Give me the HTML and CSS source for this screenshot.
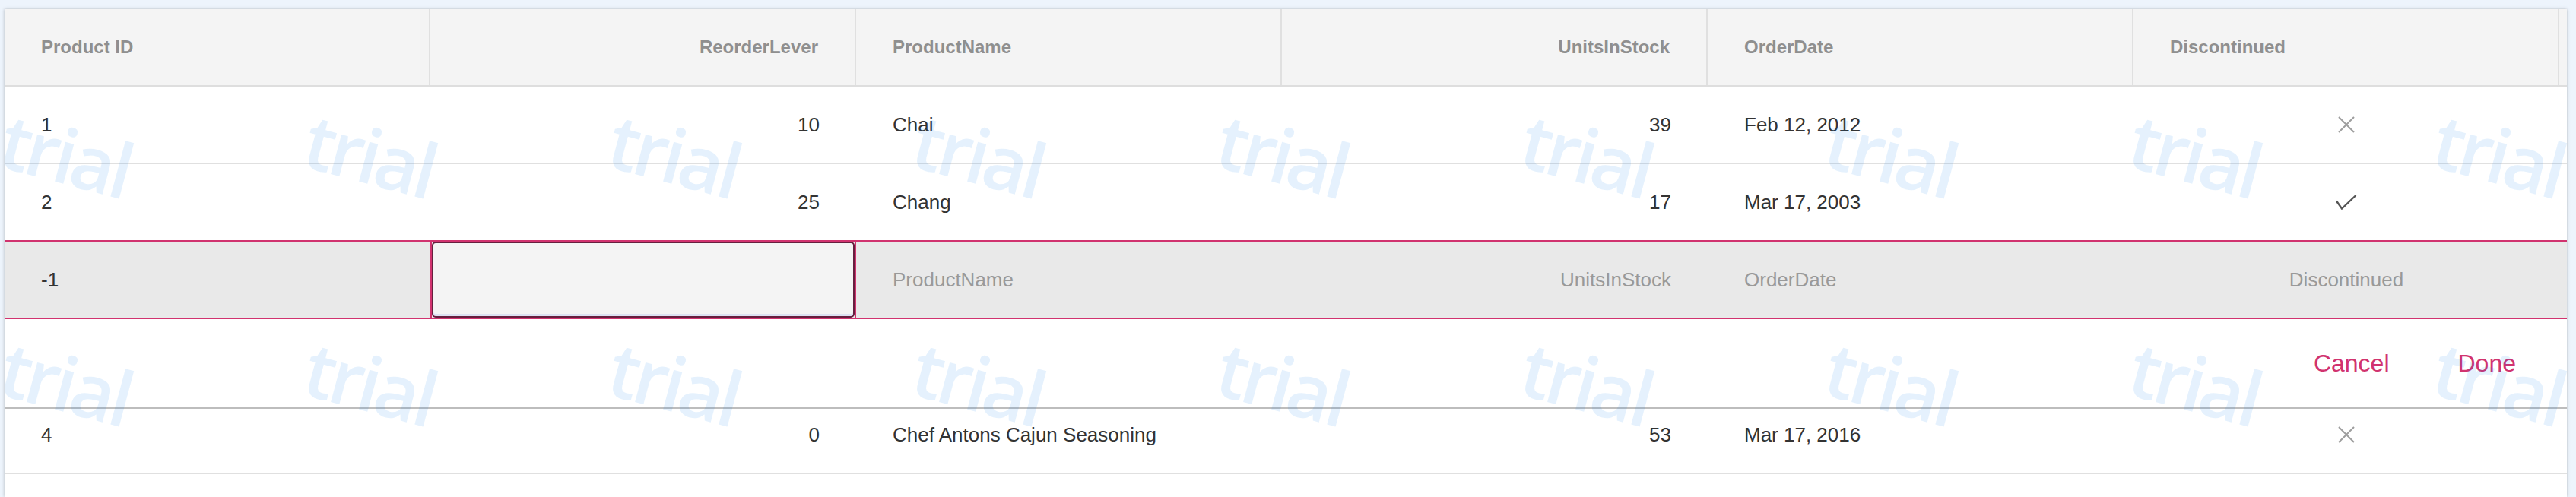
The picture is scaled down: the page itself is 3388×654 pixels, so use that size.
FILE: index.html
```html
<!DOCTYPE html>
<html lang="en">
<head>
    <meta charset="UTF-8">
    <title>Grid row editing</title>
    <link rel="stylesheet" href="styles.css">
</head>
<body>
    <div class="grid">
        <!-- Header -->
        <div class="grid-head">
            <div class="hcell">Product ID</div>
            <div class="hcell num">ReorderLever</div>
            <div class="hcell">ProductName</div>
            <div class="hcell num">UnitsInStock</div>
            <div class="hcell">OrderDate</div>
            <div class="hcell">Discontinued</div>
            <div class="hgutter"></div>
        </div>

        <div class="row">
            <div class="cell">1</div>
            <div class="cell num">10</div>
            <div class="cell">Chai</div>
            <div class="cell num">39</div>
            <div class="cell">Feb 12, 2012</div>
            <div class="cell center">
                <svg class="icon-no" width="22" height="22" viewBox="0 0 22 22"><path d="M1 1L21 21M21 1L1 21"/></svg>
            </div>
        </div>

        <div class="row row-prev">
            <div class="cell">2</div>
            <div class="cell num">25</div>
            <div class="cell">Chang</div>
            <div class="cell num">17</div>
            <div class="cell">Mar 17, 2003</div>
            <div class="cell center">
                <svg class="icon-yes" width="28" height="20" viewBox="0 0 28 20"><path d="M1 8.5L8 18.5L26.5 1"/></svg>
            </div>
        </div>

        <!-- Row in edit mode -->
        <div class="row row-edit">
            <div class="cell">-1</div>
            <div class="cell cell-editing"><div class="editor"></div></div>
            <div class="cell placeholder">ProductName</div>
            <div class="cell num placeholder">UnitsInStock</div>
            <div class="cell placeholder">OrderDate</div>
            <div class="cell center placeholder">Discontinued</div>
        </div>

        <div class="edit-banner">
            <button class="banner-btn">Cancel</button>
            <button class="banner-btn">Done</button>
        </div>

        <div class="row">
            <div class="cell">4</div>
            <div class="cell num">0</div>
            <div class="cell">Chef Antons Cajun Seasoning</div>
            <div class="cell num">53</div>
            <div class="cell">Mar 17, 2016</div>
            <div class="cell center">
                <svg class="icon-no" width="22" height="22" viewBox="0 0 22 22"><path d="M1 1L21 21M21 1L1 21"/></svg>
            </div>
        </div>

        <!-- Trial watermark -->
        <svg class="watermark" width="100%" height="100%">
            <defs>
                <pattern id="trial" x="-20" y="0" width="400" height="300" patternUnits="userSpaceOnUse">
                    <text class="watermark-text" x="8" y="206" transform="rotate(15 8 206)">trial</text>
                </pattern>
            </defs>
            <rect width="100%" height="100%" fill="url(#trial)"/>
        </svg>
    </div>
</body>
</html>
```

FILE: styles.css
```css
* {
    box-sizing: border-box;
}

body {
    margin: 0;
    background-color: #edf4fc;
    font-family: "Liberation Sans", Arial, sans-serif;
}

.grid {
    position: relative;
    margin: 12px 12px 0 6px;
    height: 642px;
    background-color: #fff;
    overflow: hidden;
    box-shadow: 0 0 4px rgba(0, 0, 0, 0.25);
}

.grid-head {
    display: grid;
    grid-template-columns: repeat(6, 560px) 1fr;
    height: 102px;
    background-color: #f4f4f4;
    border-bottom: 2px solid #dedede;
}

.hcell {
    display: flex;
    align-items: center;
    padding: 0 48px;
    border-right: 2px solid #e0e0e0;
    font-size: 24px;
    font-weight: bold;
    color: #8f8f8f;
}

.row {
    display: grid;
    grid-template-columns: repeat(6, 560px);
    height: 102px;
    border-bottom: 2px solid #e0e0e0;
    background-color: #fff;
}

.cell {
    display: flex;
    align-items: center;
    padding: 0 48px;
    font-size: 26px;
    color: #333;
}

.num {
    justify-content: flex-end;
}

.center {
    justify-content: center;
}

.row-prev {
    border-bottom-color: #d1336f;
}

.row-edit {
    background-color: #e9e9e9;
    border-bottom-color: #d1336f;
}

.placeholder {
    color: #999;
}

.cell-editing {
    padding: 0;
    align-items: stretch;
    border-left: 2px solid #d1336f;
    border-right: 2px solid #d1336f;
}

.editor {
    flex: 1;
    border: 2px solid #66203f;
    border-radius: 5px;
    background-color: #f4f4f4;
    box-shadow: inset 0 -3px 0 #dde2f2;
}

.edit-banner {
    position: relative;
    z-index: 1;
    display: flex;
    justify-content: flex-end;
    align-items: center;
    gap: 90px;
    height: 118px;
    margin-bottom: -16px;
    padding-right: 67px;
    background-color: #fff;
    border-bottom: 2px solid #bdbdbd;
}

.banner-btn {
    padding: 0;
    border: none;
    background: none;
    font-family: inherit;
    font-size: 32px;
    color: #d1336f;
}

.icon-no path {
    fill: none;
    stroke: #9e9e9e;
    stroke-width: 2;
}

.icon-yes path {
    fill: none;
    stroke: #555;
    stroke-width: 2.4;
}

.watermark {
    position: absolute;
    top: 0;
    left: 0;
    z-index: 2;
    pointer-events: none;
}

.watermark-text {
    font-family: "Open Sans", sans-serif;
    font-size: 100px;
    font-weight: 600;
    letter-spacing: -5px;
    fill: rgb(0, 120, 240);
    fill-opacity: 0.1;
}
```
